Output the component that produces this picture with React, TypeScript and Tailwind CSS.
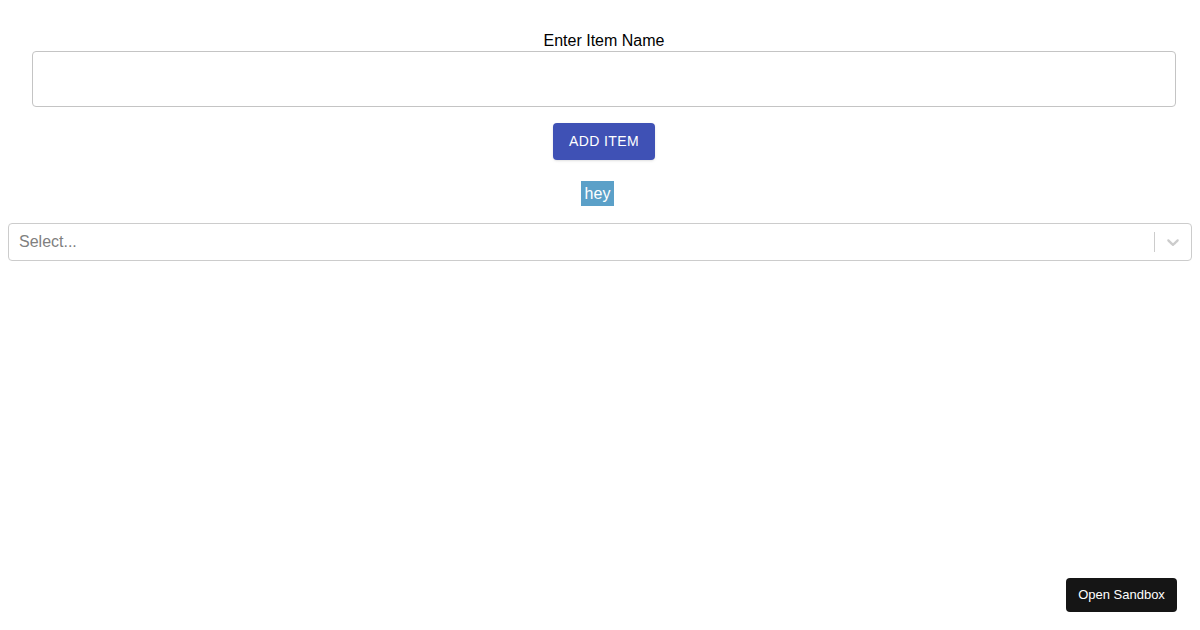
import { useState } from "react";

const App = () => {
  const [name, setName] = useState("");

  return (
    <div
      className="relative w-[1200px] h-[630px] bg-white overflow-hidden"
      style={{ fontFamily: '"Liberation Sans", Arial, sans-serif' }}
    >
      {/* Item form */}
      <div className="ml-[8px] w-[1192px] flex flex-col items-center pt-[31px]">
        <label className="text-[16px] leading-[20px] text-black">Enter Item Name</label>
        <div className="w-full px-[24px]">
          <input
            value={name}
            onChange={(e) => setName(e.target.value)}
            className="block w-full h-[56px] border border-[#c4c4c4] rounded-[4px] outline-none px-3"
          />
        </div>
        <button className="mt-[16px] h-[37px] w-[102px] rounded-[4px] bg-[#3f51b5] text-white text-[14px] tracking-[0.4px] uppercase shadow-sm">
          Add Item
        </button>
        <div className="mt-[21px] mr-[13px] h-[25px] px-[4px] flex items-center bg-[#5ba0c8] text-white text-[16px]">
          hey
        </div>
      </div>

      {/* Select */}
      <div className="px-[8px] mt-[17px]">
        <div className="flex items-center h-[38px] border border-[#cccccc] rounded-[4px] bg-white">
          <div className="flex-1 px-[8px]">
            <span className="ml-[2px] text-[16px] text-[#808080]">Select...</span>
          </div>
          <div className="flex items-center self-stretch">
            <span className="w-px h-[20px] bg-[#cccccc]" />
            <div className="p-[8px] text-[#cccccc]">
              <svg width="20" height="20" viewBox="0 0 20 20" fill="currentColor">
                <path d="M4.516 7.548c0.436-0.446 1.043-0.481 1.576 0l3.908 3.747 3.908-3.747c0.533-0.481 1.141-0.446 1.574 0 0.436 0.445 0.408 1.197 0 1.615-0.406 0.418-4.695 4.502-4.695 4.502-0.217 0.223-0.502 0.335-0.787 0.335s-0.57-0.112-0.789-0.335c0 0-4.287-4.084-4.695-4.502s-0.436-1.17 0-1.615z" />
              </svg>
            </div>
          </div>
        </div>
      </div>

      {/* Sandbox link */}
      <button className="absolute right-[23px] bottom-[18px] h-[34px] w-[111px] rounded-[4px] bg-[#151515] text-white text-[13px]">
        Open Sandbox
      </button>
    </div>
  );
};

export default App;
